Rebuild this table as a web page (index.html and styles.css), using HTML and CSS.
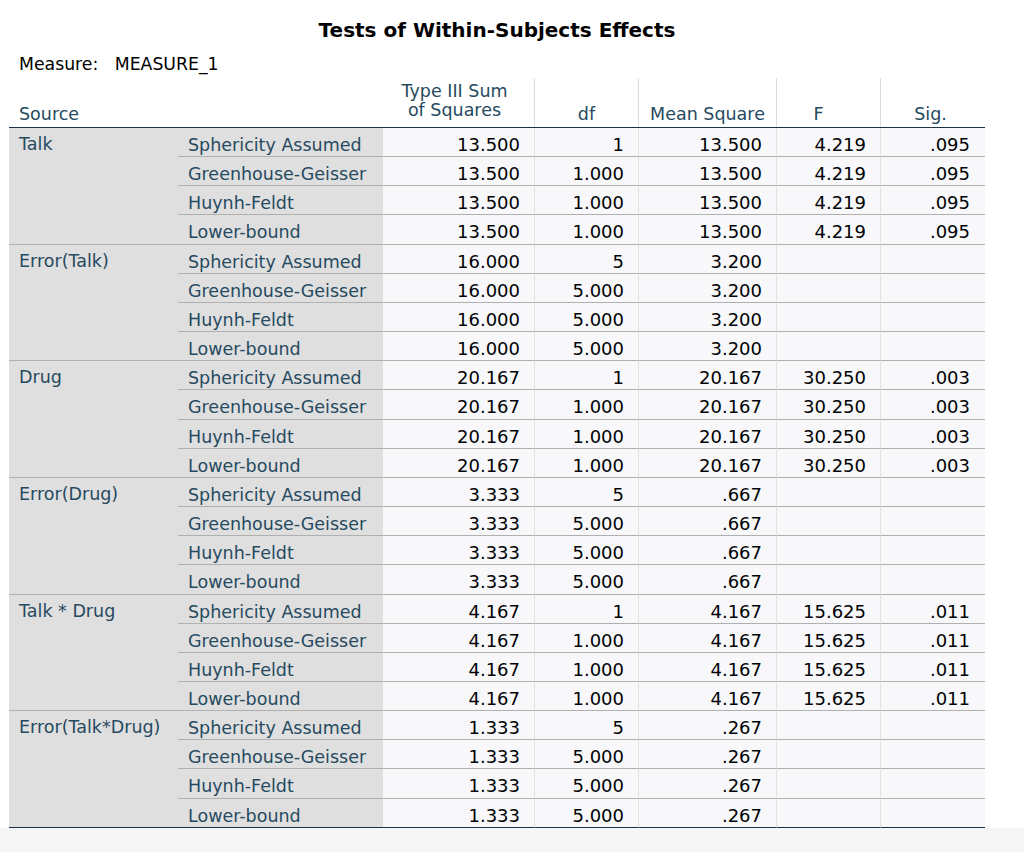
FILE: index.html
```html
<!DOCTYPE html>
<html>
<head>
<meta charset="utf-8">
<link rel="stylesheet" href="styles.css">
</head>
<body>
<div class="page">
  <h1 class="title">Tests of Within-Subjects Effects</h1>
  <div class="measure">Measure:&nbsp;&nbsp; MEASURE_1</div>
  <div class="head">
    <div class="h h-src">Source</div>
    <div class="h h-ss">Type III Sum<br>of Squares</div>
    <div class="h h-v">df</div>
    <div class="h h-v">Mean Square</div>
    <div class="h h-v h-f">F</div>
    <div class="h h-v h-sig">Sig.</div>
  </div>
  <div class="body">
    <div class="g">Talk</div>
    <div class="s">Sphericity Assumed</div><div class="n">13.500</div><div class="n v">1</div><div class="n v">13.500</div><div class="n v">4.219</div><div class="n v sig">.095</div>
    <div class="s">Greenhouse-Geisser</div><div class="n">13.500</div><div class="n v">1.000</div><div class="n v">13.500</div><div class="n v">4.219</div><div class="n v sig">.095</div>
    <div class="s">Huynh-Feldt</div><div class="n">13.500</div><div class="n v">1.000</div><div class="n v">13.500</div><div class="n v">4.219</div><div class="n v sig">.095</div>
    <div class="s">Lower-bound</div><div class="n">13.500</div><div class="n v">1.000</div><div class="n v">13.500</div><div class="n v">4.219</div><div class="n v sig">.095</div>

    <div class="g">Error(Talk)</div>
    <div class="s">Sphericity Assumed</div><div class="n">16.000</div><div class="n v">5</div><div class="n v">3.200</div><div class="n v"></div><div class="n v sig"></div>
    <div class="s">Greenhouse-Geisser</div><div class="n">16.000</div><div class="n v">5.000</div><div class="n v">3.200</div><div class="n v"></div><div class="n v sig"></div>
    <div class="s">Huynh-Feldt</div><div class="n">16.000</div><div class="n v">5.000</div><div class="n v">3.200</div><div class="n v"></div><div class="n v sig"></div>
    <div class="s">Lower-bound</div><div class="n">16.000</div><div class="n v">5.000</div><div class="n v">3.200</div><div class="n v"></div><div class="n v sig"></div>

    <div class="g">Drug</div>
    <div class="s">Sphericity Assumed</div><div class="n">20.167</div><div class="n v">1</div><div class="n v">20.167</div><div class="n v">30.250</div><div class="n v sig">.003</div>
    <div class="s">Greenhouse-Geisser</div><div class="n">20.167</div><div class="n v">1.000</div><div class="n v">20.167</div><div class="n v">30.250</div><div class="n v sig">.003</div>
    <div class="s">Huynh-Feldt</div><div class="n">20.167</div><div class="n v">1.000</div><div class="n v">20.167</div><div class="n v">30.250</div><div class="n v sig">.003</div>
    <div class="s">Lower-bound</div><div class="n">20.167</div><div class="n v">1.000</div><div class="n v">20.167</div><div class="n v">30.250</div><div class="n v sig">.003</div>

    <div class="g">Error(Drug)</div>
    <div class="s">Sphericity Assumed</div><div class="n">3.333</div><div class="n v">5</div><div class="n v">.667</div><div class="n v"></div><div class="n v sig"></div>
    <div class="s">Greenhouse-Geisser</div><div class="n">3.333</div><div class="n v">5.000</div><div class="n v">.667</div><div class="n v"></div><div class="n v sig"></div>
    <div class="s">Huynh-Feldt</div><div class="n">3.333</div><div class="n v">5.000</div><div class="n v">.667</div><div class="n v"></div><div class="n v sig"></div>
    <div class="s">Lower-bound</div><div class="n">3.333</div><div class="n v">5.000</div><div class="n v">.667</div><div class="n v"></div><div class="n v sig"></div>

    <div class="g">Talk * Drug</div>
    <div class="s">Sphericity Assumed</div><div class="n">4.167</div><div class="n v">1</div><div class="n v">4.167</div><div class="n v">15.625</div><div class="n v sig">.011</div>
    <div class="s">Greenhouse-Geisser</div><div class="n">4.167</div><div class="n v">1.000</div><div class="n v">4.167</div><div class="n v">15.625</div><div class="n v sig">.011</div>
    <div class="s">Huynh-Feldt</div><div class="n">4.167</div><div class="n v">1.000</div><div class="n v">4.167</div><div class="n v">15.625</div><div class="n v sig">.011</div>
    <div class="s">Lower-bound</div><div class="n">4.167</div><div class="n v">1.000</div><div class="n v">4.167</div><div class="n v">15.625</div><div class="n v sig">.011</div>

    <div class="g z">Error(Talk*Drug)</div>
    <div class="s">Sphericity Assumed</div><div class="n">1.333</div><div class="n v">5</div><div class="n v">.267</div><div class="n v"></div><div class="n v sig"></div>
    <div class="s">Greenhouse-Geisser</div><div class="n">1.333</div><div class="n v">5.000</div><div class="n v">.267</div><div class="n v"></div><div class="n v sig"></div>
    <div class="s">Huynh-Feldt</div><div class="n">1.333</div><div class="n v">5.000</div><div class="n v">.267</div><div class="n v"></div><div class="n v sig"></div>
    <div class="s z">Lower-bound</div><div class="n z">1.333</div><div class="n v z">5.000</div><div class="n v z">.267</div><div class="n v z"></div><div class="n v sig z"></div>
  </div>
</div>
<div class="band"></div>
</body>
</html>
```

FILE: styles.css
```css
html, body {
  margin: 0;
  padding: 0;
  background: #ffffff;
}

body {
  font-family: "DejaVu Sans", "Liberation Sans", sans-serif;
  color: #000000;
}

.page {
  padding: 18px 0 0 9px;
  width: 976px;
}

.title {
  margin: 0;
  font-size: 20px;
  line-height: 24px;
  font-weight: bold;
  text-align: center;
  color: #000000;
}

.measure {
  margin-top: 12px;
  padding-left: 10px;
  font-size: 17.3px;
  line-height: 20px;
  color: #000000;
}

.head {
  margin-top: 4px;
  display: grid;
  grid-template-columns: 169px 205px 151px 104px 138px 104px 105px;
  height: 50px;
  box-sizing: border-box;
  border-bottom: 1px solid #1f3140;
}

.h {
  display: flex;
  flex-direction: column;
  justify-content: flex-end;
  align-items: center;
  text-align: center;
  font-size: 17.5px;
  line-height: 20px;
  color: #264a60;
  padding-bottom: 3px;
}

.h-src {
  grid-column: 1 / 3;
  align-items: flex-start;
  padding-left: 10px;
}

.h-ss {
  line-height: 19px;
  padding-bottom: 7px;
  padding-right: 8px;
}

.h-v {
  border-left: 1px solid #dcdcdc;
}

.h-f {
  padding-right: 20px;
}

.h-sig {
  padding-right: 5px;
}

.body {
  display: grid;
  grid-template-columns: 169px 205px 151px 104px 138px 104px 105px;
  grid-auto-rows: 29.1667px;
}

.body > div {
  box-sizing: border-box;
  border-bottom: 1px solid #b0b0b0;
  white-space: nowrap;
}

.g, .s {
  background: #dfdfdf;
  color: #264a60;
  font-size: 17.5px;
  line-height: 20px;
  padding: 7px 0 0 10px;
}

.g {
  grid-row: span 4;
  padding-top: 6px;
}

.n {
  background: #f8f8fa;
  font-size: 18px;
  line-height: 21px;
  padding: 6px 14px 0 0;
  text-align: right;
  color: #010205;
}

.v {
  border-left: 1px solid #e2e2e2;
}

.sig {
  padding-right: 15px;
}

.body > .z {
  border-bottom-color: #1f3140;
}

.band {
  height: 24px;
  background: #f6f6f6;
}
```
